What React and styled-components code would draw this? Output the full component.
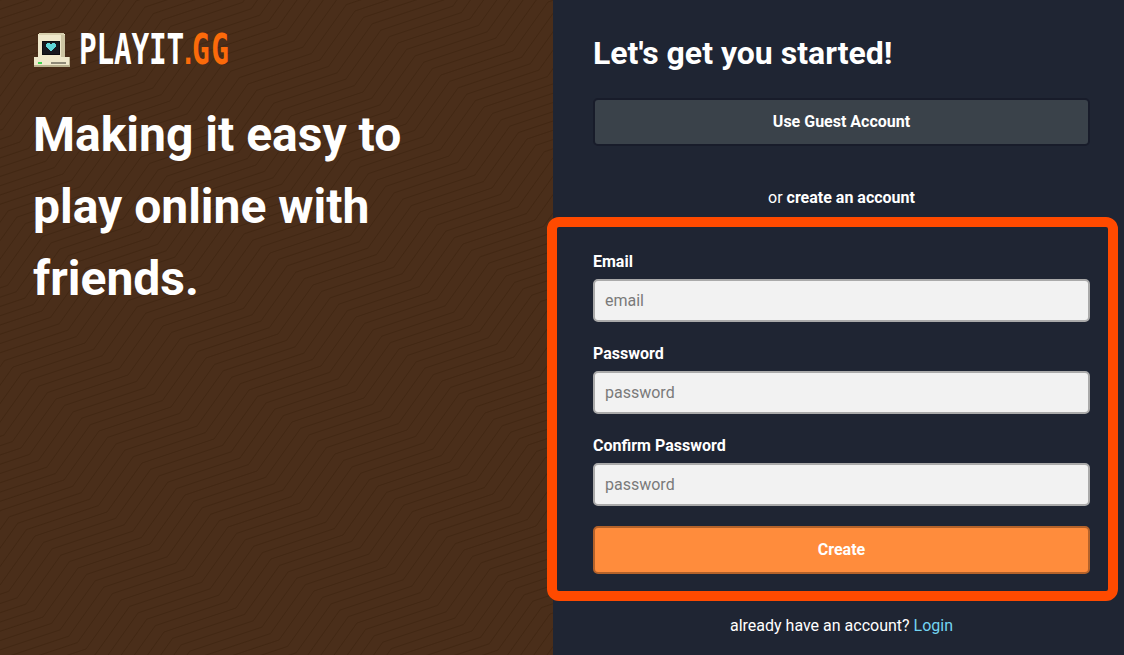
import React from "react";
import styled, { createGlobalStyle } from "styled-components";

const Global = createGlobalStyle`
  html, body { margin: 0; padding: 0; background: #1f2533; }
  body { font-family: Roboto, "Liberation Sans", sans-serif; overflow: hidden; }
  * { box-sizing: border-box; }
`;

function patternUri() {
  const W = 553, H = 655;
  const A = [107, -73], B = [8.6, 6.4], S = [72, -24];
  let d = "";
  for (let k = -130; k <= 130; k++) {
    for (let m = -12; m <= 12; m++) {
      const x = 13 + k * B[0] + m * A[0];
      const y = 367 + k * B[1] + m * A[1];
      const ux = x + S[0], uy = y + S[1];
      const nx = x + A[0], ny = y + A[1];
      const inside = (px, py) => px > -110 && px < W + 110 && py > -110 && py < H + 110;
      if (inside(x, y) || inside(ux, uy)) {
        d += `M${x.toFixed(1)} ${y.toFixed(1)}L${ux.toFixed(1)} ${uy.toFixed(1)}L${nx.toFixed(1)} ${ny.toFixed(1)}`;
      }
    }
  }
  const svg = `<svg xmlns="http://www.w3.org/2000/svg" width="${W}" height="${H}"><path d="${d}" fill="none" stroke="#422814" stroke-width="1"/></svg>`;
  return `url("data:image/svg+xml,${encodeURIComponent(svg)}")`;
}

const Page = styled.div`
  position: relative;
  display: grid;
  grid-template-columns: 553px 1fr;
  width: 1124px;
  height: 655px;
  overflow: hidden;
`;

const Hero = styled.section`
  background-color: #4a2e1a;
  background-image: ${() => patternUri()};
  background-repeat: no-repeat;
  padding: 33px 33px 0;
`;

const Brand = styled.div`
  display: flex;
  align-items: center;
  gap: 9px;
  height: 34px;
  padding-left: 1px;
`;

const BrandName = styled.div`
  display: inline-block;
  font-family: "DejaVu Sans Mono", monospace;
  font-weight: 700;
  font-size: 42px;
  letter-spacing: -0.3px;
  line-height: 34px;
  color: #fff;
  white-space: nowrap;
  transform: scaleX(0.7);
  transform-origin: left center;
`;

const BrandAccent = styled.span`
  color: #fb6a0a;
  letter-spacing: 2.2px;
`;

const BrandDot = styled.span`
  font-family: "Liberation Sans", sans-serif;
  letter-spacing: 0;
`;

const Tagline = styled.h1`
  margin: 32px 0 0;
  width: 400px;
  font-size: 48px;
  line-height: 72px;
  font-weight: 700;
  color: #fff;
`;

const Side = styled.section`
  display: flex;
  flex-direction: column;
  background: #1f2533;
  padding: 0 34px 0 40px;
`;

const Title = styled.h2`
  margin: 34px 0 0;
  font-size: 32px;
  line-height: 38px;
  font-weight: 700;
  color: #fff;
`;

const ActionButton = styled.button`
  display: block;
  width: 100%;
  height: 48px;
  padding: 0 0 2px;
  border-radius: 5px;
  font-family: inherit;
  font-size: 16px;
  font-weight: 700;
  color: #fff;
  cursor: pointer;
`;

const GuestButton = styled(ActionButton)`
  margin-top: 26px;
  background: #3a424a;
  border: 2px solid #181c2a;
`;

const CreateButton = styled(ActionButton)`
  margin-top: 20px;
  background: #ff8c3c;
  border: 2px solid #b4622a;
`;

const Divider = styled.p`
  margin: 42px 0 0;
  height: 20px;
  line-height: 20px;
  text-align: center;
  font-size: 16px;
  color: #fff;
`;

const Strong = styled.strong`
  font-weight: 700;
`;

const Form = styled.form`
  display: flex;
  flex-direction: column;
  margin-top: 45px;
`;

const Field = styled.label`
  display: flex;
  flex-direction: column;
  margin-bottom: 23px;
  &:nth-of-type(3) { margin-bottom: 0; }
`;

const LabelText = styled.span`
  height: 18px;
  line-height: 18px;
  font-size: 16px;
  font-weight: 700;
  color: #fff;
`;

const Input = styled.input`
  width: 100%;
  height: 43px;
  margin-top: 8px;
  padding: 0 10px;
  background: #f2f2f2;
  border: 2px solid #aaa;
  border-radius: 5px;
  font-family: inherit;
  font-size: 16px;
  color: #222;
  &::placeholder { color: #7a7a7a; opacity: 1; }
`;

const Footer = styled.p`
  margin: 42px 0 0;
  height: 20px;
  line-height: 20px;
  text-align: center;
  font-size: 16px;
  color: #fff;
`;

const LoginLink = styled.a`
  color: #74d4f2;
  text-decoration: none;
`;

const Highlight = styled.div`
  position: absolute;
  left: 547px;
  top: 217px;
  width: 571px;
  height: 384px;
  border: 10.5px solid #ff4a00;
  border-radius: 12px;
  pointer-events: none;
`;

const ComputerIcon = () => (
  <svg width="36" height="34" viewBox="0 0 36 34" shapeRendering="crispEdges" aria-hidden="true">
    <rect x="4" y="1" width="27" height="23" fill="#efe8cb" />
    <rect x="5" y="0" width="25" height="2" fill="#d8d0ae" />
    <rect x="27" y="2" width="4" height="22" fill="#cdc5a3" />
    <rect x="8" y="8" width="18" height="14" fill="#0c0c10" />
    <rect x="9" y="9" width="16" height="12" fill="#17181f" />
    <path d="M13 10h3v1h2v-1h3v1h1v3h-1v1h-1v1h-1v1h-1v1h-2v-1h-1v-1h-1v-1h-1v-1h-1v-3h1z" fill="#5fd5d8" />
    <rect x="0" y="24" width="36" height="10" fill="#efe8cb" />
    <rect x="0" y="32" width="36" height="2" fill="#b8b08e" />
    <rect x="35" y="24" width="1" height="10" fill="#b8b08e" />
    <rect x="4" y="29" width="4" height="2" fill="#3fd24f" />
    <rect x="17" y="29" width="15" height="2" fill="#8f8a78" />
  </svg>
);

export default function App() {
  return (
    <Page>
      <Global />
      <Hero>
        <Brand>
          <ComputerIcon />
          <BrandName>PLAYIT<BrandAccent><BrandDot>.</BrandDot>GG</BrandAccent></BrandName>
        </Brand>
        <Tagline>Making it easy to play online with friends.</Tagline>
      </Hero>
      <Side>
        <Title>Let's get you started!</Title>
        <GuestButton type="button">Use Guest Account</GuestButton>
        <Divider>or <Strong>create an account</Strong></Divider>
        <Form onSubmit={e => e.preventDefault()}>
          <Field>
            <LabelText>Email</LabelText>
            <Input type="email" placeholder="email" />
          </Field>
          <Field>
            <LabelText>Password</LabelText>
            <Input type="password" placeholder="password" />
          </Field>
          <Field>
            <LabelText>Confirm Password</LabelText>
            <Input type="password" placeholder="password" />
          </Field>
          <CreateButton type="submit">Create</CreateButton>
        </Form>
        <Footer>already have an account? <LoginLink href="#">Login</LoginLink></Footer>
      </Side>
      <Highlight />
    </Page>
  );
}
